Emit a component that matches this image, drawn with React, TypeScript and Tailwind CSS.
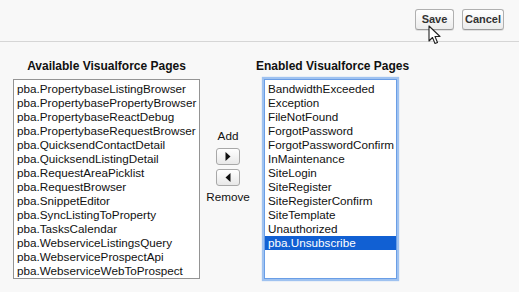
import React from "react";

const available = [
  "pba.PropertybaseListingBrowser",
  "pba.PropertybasePropertyBrowser",
  "pba.PropertybaseReactDebug",
  "pba.PropertybaseRequestBrowser",
  "pba.QuicksendContactDetail",
  "pba.QuicksendListingDetail",
  "pba.RequestAreaPicklist",
  "pba.RequestBrowser",
  "pba.SnippetEditor",
  "pba.SyncListingToProperty",
  "pba.TasksCalendar",
  "pba.WebserviceListingsQuery",
  "pba.WebserviceProspectApi",
  "pba.WebserviceWebToProspect",
];

const enabled = [
  "BandwidthExceeded",
  "Exception",
  "FileNotFound",
  "ForgotPassword",
  "ForgotPasswordConfirm",
  "InMaintenance",
  "SiteLogin",
  "SiteRegister",
  "SiteRegisterConfirm",
  "SiteTemplate",
  "Unauthorized",
  "pba.Unsubscribe",
];

function SaveButton() {
  return (
    <button className="w-[39px] h-[21px] rounded-[3px] border border-[#b0b0b0] border-b-[#9a9a9a] bg-gradient-to-b from-[#ffffff] to-[#ececec] text-[11px] font-bold text-[#333] leading-none shadow-[0_1px_0_#e0e0e0] flex items-center justify-center">
      Save
    </button>
  );
}

function CancelButton() {
  return (
    <button className="w-[42px] h-[21px] rounded-[3px] border border-[#b0b0b0] border-b-[#9a9a9a] bg-gradient-to-b from-[#ffffff] to-[#ececec] text-[11px] font-bold text-[#333] leading-none shadow-[0_1px_0_#e0e0e0] flex items-center justify-center">
      Cancel
    </button>
  );
}

function ArrowButton({ dir }: { dir: "right" | "left" }) {
  return (
    <button className="w-[24px] h-[17px] rounded-[3px] border border-[#a8a8a8] bg-gradient-to-b from-[#ffffff] to-[#e8e8e8] flex items-center justify-center">
      <svg width="6" height="9" viewBox="0 0 6 9">
        {dir === "right" ? (
          <polygon points="0.5,0 5.5,4.5 0.5,9" fill="#111" />
        ) : (
          <polygon points="5.5,0 0.5,4.5 5.5,9" fill="#111" />
        )}
      </svg>
    </button>
  );
}

export default function App() {
  return (
    <div
      className="relative w-[519px] h-[292px] bg-[#f8f8f8] text-[#111] overflow-hidden"
      style={{ fontFamily: '"Liberation Sans", Arial, sans-serif' }}
    >
      <div className="h-[41px] flex items-start justify-end gap-[8px] pr-[15px] pt-[9px]">
        <SaveButton />
        <CancelButton />
      </div>
      <div className="h-px bg-[#d6d6d6]" />

      <div className="flex items-start pt-[17px] pl-[13px]">
        <div className="w-[187px] flex flex-col">
          <div className="text-[12px] font-bold leading-[14px] text-center">
            Available Visualforce Pages
          </div>
          <div className="mt-[6px] h-[200px] border border-[#949494] bg-white pt-[2px] overflow-hidden">
            {available.map((t) => (
              <div key={t} className="h-[14px] leading-[14px] text-[11.7px] pl-[3px] whitespace-nowrap">
                {t}
              </div>
            ))}
          </div>
        </div>

        <div className="w-[56px] flex flex-col items-center pt-[70px]">
          <div className="text-[11.7px] leading-[14px]">Add</div>
          <div className="mt-[5px]">
            <ArrowButton dir="right" />
          </div>
          <div className="mt-[4px]">
            <ArrowButton dir="left" />
          </div>
          <div className="mt-[4px] text-[11.7px] leading-[14px]">Remove</div>
        </div>

        <div className="flex flex-col items-start">
          <div className="text-[12px] font-bold leading-[14px] whitespace-nowrap">
            Enabled Visualforce Pages
          </div>
          <div className="mt-[6px] ml-[8px] w-[133px] h-[200px] border border-[#6a9ee6] bg-white pt-[2px] overflow-hidden shadow-[0_0_1px_2px_#9fc2f0]">
            {enabled.map((t) => (
              <div
                key={t}
                className={
                  t === "pba.Unsubscribe"
                    ? "h-[14px] leading-[14px] text-[11.7px] pl-[3px] whitespace-nowrap bg-[#1160d3] text-white"
                    : "h-[14px] leading-[14px] text-[11.7px] pl-[3px] whitespace-nowrap"
                }
              >
                {t}
              </div>
            ))}
          </div>
        </div>
      </div>

      <svg
        className="absolute left-[428px] top-[25px]"
        width="14"
        height="21"
        viewBox="0 0 14 21"
      >
        <path
          d="M1 1 L1 16 L4.5 12.5 L7 18.5 L9.5 17.5 L7 11.5 L12 11.5 Z"
          fill="#fff"
          stroke="#222"
          strokeWidth="1.1"
          strokeLinejoin="round"
        />
      </svg>
    </div>
  );
}
